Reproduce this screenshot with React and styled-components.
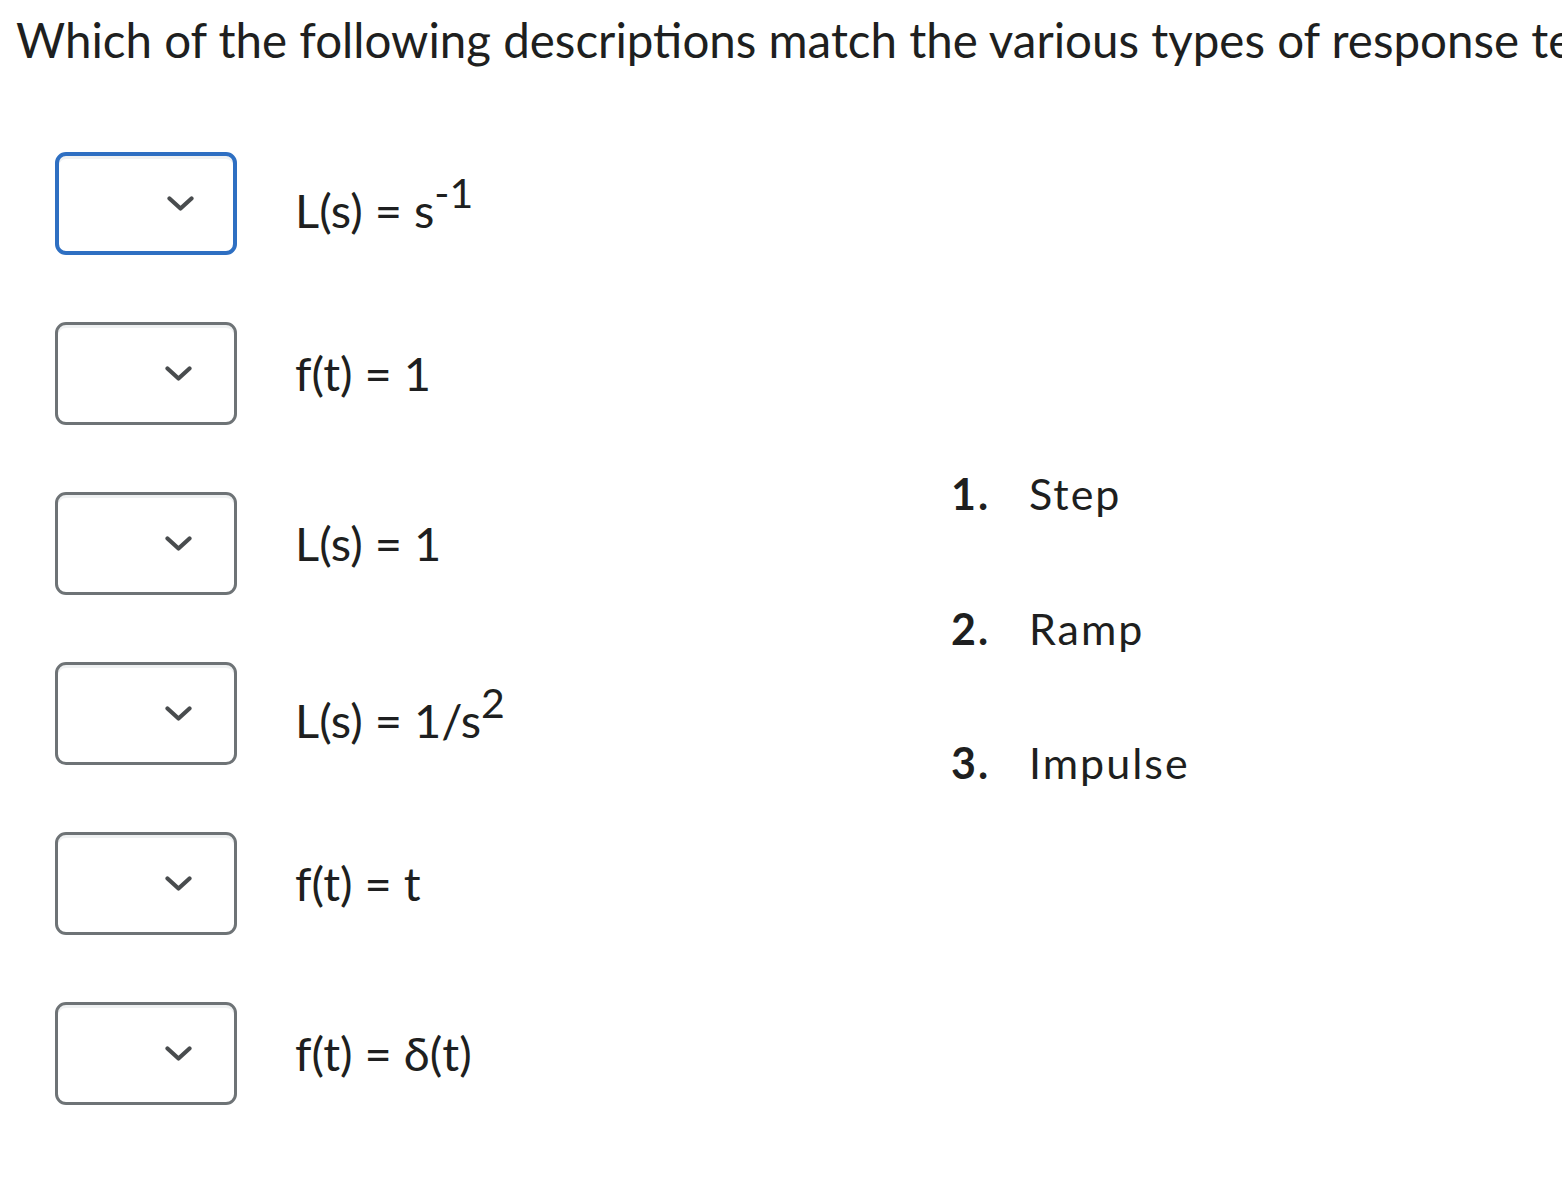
import React from "react";
import styled, { createGlobalStyle } from "styled-components";

const GlobalStyle = createGlobalStyle`
  html, body {
    margin: 0;
    padding: 0;
    background: #ffffff;
    overflow: hidden;
  }
  body {
    font-family: Lato, "Open Sans", sans-serif;
    color: #202122;
    line-height: 1.2;
  }
`;

const rows = [
  { id: 1, focused: true, label: ["L(s) = s", "-1"] },
  { id: 2, label: ["f(t) = 1"] },
  { id: 3, label: ["L(s) = 1"] },
  { id: 4, label: ["L(s) = 1/s", "2"] },
  { id: 5, label: ["f(t) = t"] },
  { id: 6, label: ["f(t) = δ(t)"] },
];

const choices = ["Step", "Ramp", "Impulse"];

function Chevron() {
  return (
    <ChevronSvg viewBox="0 0 27 16" width="27" height="16">
      <path
        d="M2.5 2.5 L13.5 12.5 L24.5 2.5"
        fill="none"
        stroke="#494c4e"
        strokeWidth="4.2"
        strokeLinecap="round"
        strokeLinejoin="round"
      />
    </ChevronSvg>
  );
}

export default function App() {
  return (
    <>
      <GlobalStyle />
      <Page>
        <Question>
          Which of the following descriptions match the various types of response terms?
        </Question>
        <Matching>
          <Pairs>
            {rows.map((row) => (
              <Row key={row.id}>
                <SelectBox focused={row.focused}>
                  <Chevron />
                </SelectBox>
                <Formula>
                  {row.label[0]}
                  {row.label[1] && <Sup>{row.label[1]}</Sup>}
                </Formula>
              </Row>
            ))}
          </Pairs>
          <Choices>
            {choices.map((c, index) => (
              <Choice key={c}>
                <Num>{index + 1}.</Num>
                <span>{c}</span>
              </Choice>
            ))}
          </Choices>
        </Matching>
      </Page>
    </>
  );
}

const Page = styled.div`
  padding-top: 11px;
  width: 1562px;
`;

const Question = styled.h1`
  margin: 0;
  padding-left: 16px;
  font-size: 47.5px;
  font-weight: 400;
  line-height: 1.2;
  white-space: nowrap;
  color: #1e1f20;
`;

const Matching = styled.div`
  display: flex;
  align-items: center;
  margin-top: 84px;
`;

const Pairs = styled.div`
  display: flex;
  flex-direction: column;
  gap: 67px;
  width: 895px;
  padding-left: 55px;
  box-sizing: border-box;
`;

const Row = styled.div`
  display: flex;
  align-items: center;
  gap: 58px;
`;

const SelectBox = styled.div`
  width: 182px;
  height: 103px;
  box-sizing: border-box;
  border: ${(p) => (p.focused ? "4px solid #2e6fc2" : "3px solid #6e7376")};
  border-radius: 11px;
  box-shadow: inset 0 3px 0 0 rgba(177, 185, 190, 0.2);
  background: #ffffff;
  display: flex;
  align-items: center;
  justify-content: flex-end;
  padding-right: ${(p) => (p.focused ? "39px" : "42px")};
`;

const ChevronSvg = styled.svg`
  display: block;
  margin-top: 1px;
`;

const Formula = styled.div`
  font-size: 47px;
  line-height: 1.2;
  color: #1e1f20;
  white-space: nowrap;
`;

const Sup = styled.span`
  font-size: 41px;
  vertical-align: 20px;
`;

const Choices = styled.ol`
  list-style: none;
  margin: 0;
  padding: 0 0 0 56px;
  display: flex;
  flex-direction: column;
  gap: 83px;
`;

const Choice = styled.li`
  display: flex;
  font-size: 43px;
  letter-spacing: 2px;
  line-height: 1.2;
  color: #1e1f20;
`;

const Num = styled.span`
  width: 78px;
  font-weight: 700;
`;
